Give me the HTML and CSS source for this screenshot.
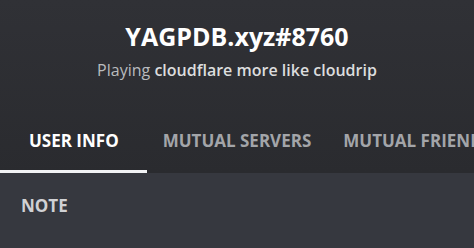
FILE: index.html
```html
<!DOCTYPE html>
<html lang="en">
<head>
  <meta charset="UTF-8">
  <title>User Profile</title>
  <link rel="stylesheet" href="styles.css">
</head>
<body>
  <div class="profile-header">
    <div class="username">YAGPDB.xyz#8760</div>
    <div class="activity">Playing <strong>cloudflare more like cloudrip</strong></div>

    <div class="tab-bar">
      <div class="tab active">User Info</div>
      <div class="tab">Mutual Servers</div>
      <div class="tab">Mutual Friends</div>
    </div>
  </div>

  <div class="profile-body">
    <div class="section-title">Note</div>
  </div>
</body>
</html>
```

FILE: styles.css
```css
:root {
  --bg-header: #2d2e33;
  --bg-body: #36383f;
  --text-bright: #ffffff;
  --text-muted: #b9bbbe;
  --text-soft: #dcddde;
}

html, body {
  margin: 0;
  height: 100%;
}

body {
  font-family: 'Open Sans', 'Noto Sans', sans-serif;
  background-color: var(--bg-body);
  color: var(--text-soft);
  overflow: hidden;
}

.profile-header {
  background: linear-gradient(#303136, #2a2b2f);
  text-align: center;
  padding-top: 20px;
}

.username {
  font-size: 25px;
  font-weight: 700;
  color: var(--text-bright);
  line-height: 32px;
}

.activity {
  font-size: 16px;
  color: var(--text-muted);
  line-height: 22px;
  margin-top: 7px;
}
.activity strong {
  font-weight: 600;
  color: var(--text-soft);
}

/* tabs run off the right edge, the panel is wider than the view */
.tab-bar {
  display: flex;
  margin-top: 49px;
  white-space: nowrap;
  overflow: hidden;
}

.tab {
  font-size: 17px;
  font-weight: 700;
  text-transform: uppercase;
  color: #a3a5a9;
  padding: 0 16px 18px;
  line-height: 22px;
  border-bottom: 3px solid transparent;
  flex-shrink: 0;
}
.tab.active {
  color: var(--text-bright);
  padding: 0 28px 18px 29px;
  border-bottom-color: #f2f3f5;
}

.profile-body {
  padding: 22px 21px;
}

.section-title {
  font-size: 17px;
  font-weight: 700;
  text-transform: uppercase;
  color: #d0d1d4;
  line-height: 22px;
}
```
